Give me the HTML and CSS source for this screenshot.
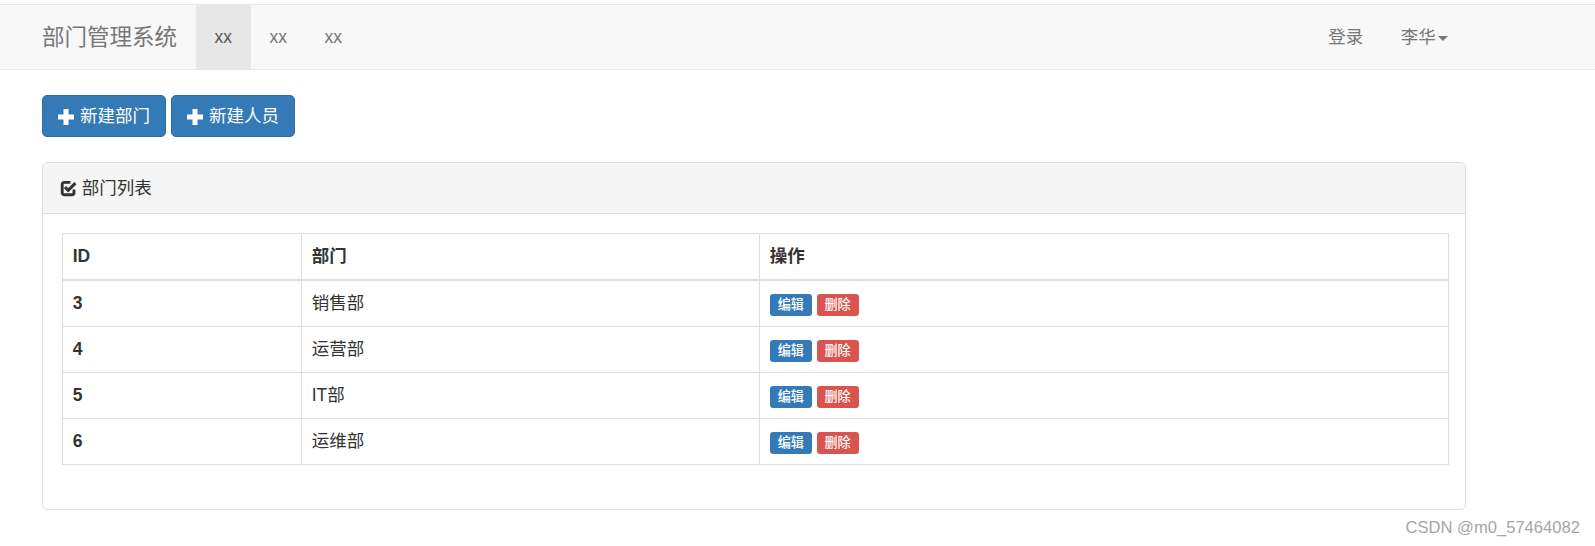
FILE: index.html
```html
<!DOCTYPE html>
<html lang="zh-CN">
<head>
<meta charset="utf-8">
<title>部门管理系统</title>
<link rel="stylesheet" href="styles.css">
</head>
<body>
<nav class="navbar">
  <div class="nav-inner">
    <a class="brand" href="#">部门管理系统</a>
    <ul class="nav">
      <li class="active"><a href="#">xx</a></li>
      <li><a href="#">xx</a></li>
      <li><a href="#">xx</a></li>
    </ul>
    <ul class="nav nav-right">
      <li><a href="#">登录</a></li>
      <li><a href="#">李华<span class="caret"></span></a></li>
    </ul>
  </div>
</nav>

<div class="container">
  <div class="toolbar">
    <a class="btn" href="#"><svg class="plus" width="16" height="16" viewBox="0 0 16 16"><path d="M5.5 0h5v5.5h5.5v5h-5.5v5.5h-5v-5.5h-5.5v-5h5.5z" fill="#fff"/></svg>新建部门</a>
    <a class="btn" href="#"><svg class="plus" width="16" height="16" viewBox="0 0 16 16"><path d="M5.5 0h5v5.5h5.5v5h-5.5v5.5h-5v-5.5h-5.5v-5h5.5z" fill="#fff"/></svg>新建人员</a>
  </div>

  <div class="panel">
    <div class="panel-heading"><svg class="check" width="17" height="17" viewBox="0 0 17 17"><path d="M10.4 2.4H4.2A2 2 0 0 0 2.2 4.4V12.8A2 2 0 0 0 4.2 14.8H12A2 2 0 0 0 14 12.8V9.6" fill="none" stroke="#333" stroke-width="2.9"/><path d="M5 7.2L8.2 10.4L15.4 3.2" fill="none" stroke="#333" stroke-width="3.1"/></svg>部门列表</div>
    <div class="panel-body">
      <table class="table">
        <colgroup><col class="c-id"><col class="c-name"><col class="c-op"></colgroup>
        <thead>
          <tr><th>ID</th><th>部门</th><th>操作</th></tr>
        </thead>
        <tbody>
          <tr><th>3</th><td>销售部</td><td><span class="label primary">编辑</span> <span class="label danger">删除</span></td></tr>
          <tr><th>4</th><td>运营部</td><td><span class="label primary">编辑</span> <span class="label danger">删除</span></td></tr>
          <tr><th>5</th><td>IT部</td><td><span class="label primary">编辑</span> <span class="label danger">删除</span></td></tr>
          <tr><th>6</th><td>运维部</td><td><span class="label primary">编辑</span> <span class="label danger">删除</span></td></tr>
        </tbody>
      </table>
    </div>
  </div>
</div>

<div class="watermark">CSDN @m0_57464082</div>
</body>
</html>
```
FILE: styles.css
```css
html, body {
  margin: 0;
  padding: 0;
  background: #fff;
}
body {
  font-family: "Liberation Sans", "Noto Sans CJK SC", sans-serif;
  font-size: 17.5px;
  line-height: 25px;
  color: #333;
  position: relative;
  min-height: 546px;
}
a { text-decoration: none; }

.navbar {
  margin-top: 4px;
  background: #f8f8f8;
  border-top: 1px solid #e7e7e7;
  border-bottom: 1px solid #e7e7e7;
  height: 64px;
}
.nav-inner {
  margin-left: 23.25px;
  width: 1443.75px;
  height: 64px;
  display: flex;
  align-items: stretch;
}
.brand {
  display: flex;
  align-items: center;
  padding: 0 18.75px;
  font-size: 22.5px;
  color: #777;
}
.nav {
  list-style: none;
  margin: 0;
  padding: 0;
  display: flex;
}
.nav li { display: flex; }
.nav a {
  display: flex;
  align-items: center;
  padding: 0 18.75px;
  color: #777;
}
.nav li.active a {
  background: #e7e7e7;
  color: #555;
}
.nav-right { margin-left: auto; }
.caret {
  display: inline-block;
  width: 0;
  height: 0;
  margin-left: 2.5px;
  margin-top: 2px;
  border-top: 5px solid #777;
  border-left: 5px solid transparent;
  border-right: 5px solid transparent;
}

.container {
  margin-left: 42px;
  width: 1424px;
}
.toolbar {
  margin-top: 25px;
  display: flex;
  gap: 5px;
}
.btn {
  display: flex;
  align-items: center;
  height: 40px;
  padding: 0 15px;
  border: 1px solid #2e6da4;
  border-radius: 5px;
  background: #337ab7;
  color: #fff;
  font-size: 17.5px;
}
.plus {
  flex-shrink: 0;
  width: 16px;
  height: 16px;
  margin-right: 6px;
  margin-top: 1px;
}

.panel {
  margin-top: 25px;
  border: 1px solid #ddd;
  border-radius: 5px;
  background: #fff;
}
.panel-heading {
  background: #f5f5f5;
  border-bottom: 1px solid #ddd;
  border-radius: 4px 4px 0 0;
  padding: 12.5px 18.75px;
  height: 25px;
  display: flex;
  align-items: center;
  color: #333;
}
.check {
  flex-shrink: 0;
  width: 17px;
  height: 17px;
  margin-right: 5px;
  margin-left: -2px;
}
.panel-body {
  padding: 18.75px 18.75px 18.75px;
}

.table {
  width: 1386px;
  border-collapse: collapse;
  table-layout: fixed;
  margin-bottom: 25px;
}
.c-id { width: 239px; }
.c-name { width: 458px; }
.c-op { width: 689px; }
.table th, .table td {
  border: 1px solid #ddd;
  padding: 10px 10px 10px;
  line-height: 25px;
  text-align: left;
  vertical-align: top;
  font-size: 17.5px;
  color: #333;
}
.table th { font-weight: bold; }
.table thead th {
  border-bottom: 2px solid #ddd;
  vertical-align: bottom;
}

.label {
  display: inline;
  padding: 0.2em 0.6em 0.3em;
  font-size: 13.125px;
  font-weight: 500;
  line-height: 1;
  color: #fff;
  border-radius: 0.25em;
  white-space: nowrap;
  vertical-align: baseline;
}
.label.primary { background: #337ab7; }
.label.danger { background: #d9534f; }

.watermark {
  position: absolute;
  top: 518px;
  right: 15px;
  font-size: 16.6px;
  line-height: 20px;
  color: #a6a6a6;
}
```
